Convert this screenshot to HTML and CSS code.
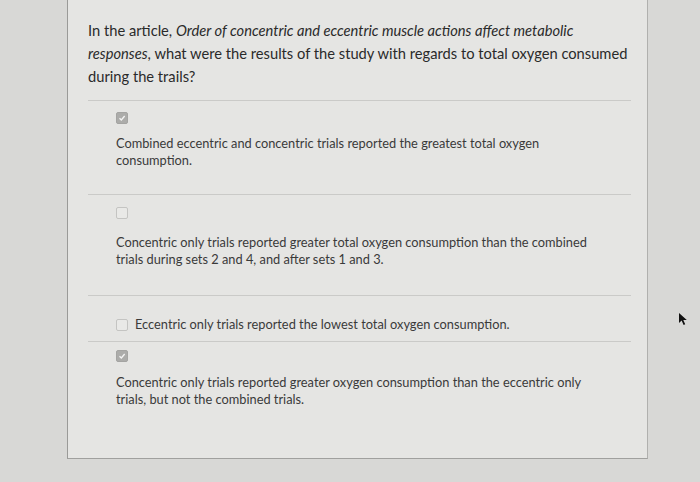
FILE: index.html
```html
<!DOCTYPE html>
<html>
<head>
<meta charset="utf-8">
<link rel="stylesheet" href="styles.css">
</head>
<body>
<div class="screen">
  <div class="panel">
    <p class="question">In the article, <em>Order of concentric and eccentric muscle actions affect metabolic responses</em>, what were the results of the study with regards to total oxygen consumed during the trails?</p>
    <div class="sep sep-1"></div>
    <div class="option opt-1">
      <span class="cb checked"><svg viewBox="0 0 12 12"><path d="M3 6.2 L5.2 8.4 L9.2 3.6" fill="none" stroke="#f4f4f4" stroke-width="1.6"/></svg></span>
      <div class="otext">Combined eccentric and concentric trials reported the greatest total oxygen consumption.</div>
    </div>
    <div class="sep"></div>
    <div class="option opt-2">
      <span class="cb"></span>
      <div class="otext">Concentric only trials reported greater total oxygen consumption than the combined trials during sets 2 and 4, and after sets 1 and 3.</div>
    </div>
    <div class="sep"></div>
    <div class="option inline opt-3">
      <span class="cb"></span>
      <div class="otext">Eccentric only trials reported the lowest total oxygen consumption.</div>
    </div>
    <div class="sep"></div>
    <div class="option opt-4">
      <span class="cb checked"><svg viewBox="0 0 12 12"><path d="M3 6.2 L5.2 8.4 L9.2 3.6" fill="none" stroke="#f4f4f4" stroke-width="1.6"/></svg></span>
      <div class="otext">Concentric only trials reported greater oxygen consumption than the eccentric only trials, but not the combined trials.</div>
    </div>
  </div>
  <svg class="cursor" viewBox="0 0 10 14" width="10" height="14"><path d="M1 1 L1 11 L3.6 8.6 L5.6 13 L7.2 12.3 L5.3 8 L8.8 8 Z" fill="#111"/></svg>
</div>
</body>
</html>
```

FILE: styles.css
```css
html, body {
  margin: 0;
  padding: 0;
}
body {
  background: #d8d8d6;
  font-family: Lato, "Open Sans", sans-serif;
  width: 700px;
  height: 482px;
  overflow: hidden;
}
.screen {
  position: relative;
  width: 700px;
  height: 482px;
}
.panel {
  margin-left: 67px;
  width: 581px;
  height: 459px;
  box-sizing: border-box;
  background: #e5e5e3;
  border-left: 1px solid #9a9a98;
  border-right: 1px solid #b0b0ae;
  border-bottom: 1px solid #a0a09e;
  padding: 0 16px 0 20px;
}
.question {
  margin: 0;
  padding-top: 19px;
  font-size: 14.7px;
  line-height: 23px;
  color: #2a2a2a;
  width: 545px;
}
.question em {
  font-style: italic;
}
.sep {
  border-top: 1px solid #cacac8;
}
.sep-1 {
  margin-top: 12px;
}
.option {
  padding-left: 28px;
  font-size: 12.8px;
  line-height: 17px;
  color: #3a3a3a;
}
.cb {
  display: block;
  width: 12px;
  height: 12px;
  flex: none;
  box-sizing: border-box;
  border: 1px solid #c4c4c2;
  border-radius: 2px;
  background: #e9e9e7;
}
.cb.checked {
  background: #acacaa;
  border-color: #a4a4a2;
}
.cb svg {
  display: block;
  width: 10px;
  height: 10px;
}
.otext {
  margin-top: 11px;
  max-width: 480px;
}
.opt-1 {
  padding-top: 11px;
  padding-bottom: 25px;
}
.opt-2 {
  padding-top: 12px;
  padding-bottom: 27px;
}
.opt-2 .otext {
  margin-top: 15px;
}
.opt-3 {
  display: flex;
  align-items: center;
  gap: 7px;
  padding-top: 20px;
  padding-bottom: 8px;
}
.opt-3 .otext {
  margin-top: 0;
}
.opt-4 {
  padding-top: 8px;
}
.opt-4 .otext {
  margin-top: 12px;
}
.cursor {
  position: absolute;
  left: 678px;
  top: 312px;
}
```
